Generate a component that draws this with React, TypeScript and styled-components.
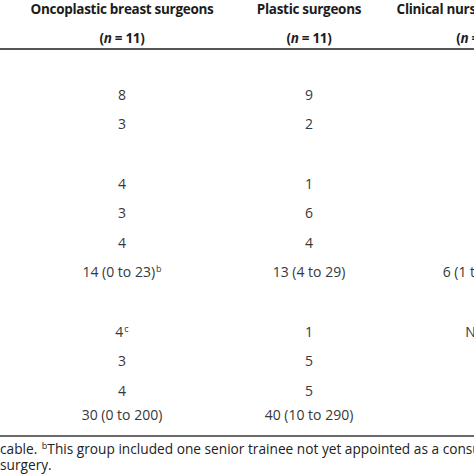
import React from "react";
import styled, { createGlobalStyle } from "styled-components";

const GlobalStyle = createGlobalStyle`
  html, body {
    margin: 0;
    padding: 0;
    background: #ffffff;
    overflow: hidden;
  }
  body {
    font-family: "Open Sans", "Liberation Sans", sans-serif;
  }
`;

const columns = "244px 130px 202px";

const Page = styled.div`
  width: 474px;
  height: 474px;
  overflow: hidden;
  background: #ffffff;
`;

const Table = styled.div`
  width: 576px;
  display: flex;
  flex-direction: column;
`;

const Head = styled.div`
  display: flex;
  flex-direction: column;
  padding-bottom: 2px;
  border-bottom: 2px solid #555555;
`;

const HeadRow = styled.div<{ $height: number; $top?: number }>`
  display: grid;
  grid-template-columns: ${columns};
  height: ${(p) => p.$height}px;
  margin-top: ${(p) => p.$top ?? 0}px;
  align-items: center;
  font-size: 13.5px;
  letter-spacing: -0.3px;
  font-weight: 700;
  color: #1c1c1c;
  white-space: nowrap;
`;

const Body = styled.div`
  display: flex;
  flex-direction: column;
  padding-bottom: 14px;
  border-bottom: 2px solid #6a6a6a;
`;

const Row = styled.div<{ $height: number }>`
  display: grid;
  grid-template-columns: ${columns};
  height: ${(p) => p.$height}px;
  align-items: center;
  font-size: 14px;
  color: #383838;
  white-space: nowrap;
`;

const Cell = styled.div`
  text-align: center;
`;

const Sup = styled.sup`
  font-size: 9px;
  line-height: 0;
  vertical-align: 5px;
  margin-left: 1px;
`;

const Italic = styled.i`
  font-style: italic;
`;

const Footnote = styled.div`
  padding-top: 4px;
  font-size: 13.7px;
  line-height: 16px;
  color: #222222;
  white-space: nowrap;
`;

type Value = { text: string; sup?: string };
type DataRow = { height: number; cells: (Value | null)[] };

const rows: DataRow[] = [
  { height: 29.6, cells: [null, null, null] },
  { height: 29.6, cells: [{ text: "8" }, { text: "9" }, null] },
  { height: 29.6, cells: [{ text: "3" }, { text: "2" }, null] },
  { height: 29.6, cells: [null, null, null] },
  { height: 29.6, cells: [{ text: "4" }, { text: "1" }, null] },
  { height: 29.6, cells: [{ text: "3" }, { text: "6" }, null] },
  { height: 29.6, cells: [{ text: "4" }, { text: "4" }, null] },
  {
    height: 29.6,
    cells: [
      { text: "14 (0 to 23)", sup: "b" },
      { text: "13 (4 to 29)" },
      { text: "6 (1 to 12)" },
    ],
  },
  { height: 29.6, cells: [null, null, null] },
  { height: 29.6, cells: [{ text: "4", sup: "c" }, { text: "1" }, { text: "NA" }] },
  { height: 29.6, cells: [{ text: "3" }, { text: "5" }, null] },
  { height: 29.6, cells: [{ text: "4" }, { text: "5" }, null] },
  { height: 16, cells: [{ text: "30 (0 to 200)" }, { text: "40 (10 to 290)" }, null] },
];

const headers = [
  "Oncoplastic breast surgeons",
  "Plastic surgeons",
  "Clinical nurse specialists",
];
const counts = ["11", "11", "6"];

const App: React.FC = () => {
  return (
    <Page>
      <GlobalStyle />
      <Table>
        <Head>
          <HeadRow $height={16}>
            {headers.map((h) => (
              <Cell key={h}>{h}</Cell>
            ))}
          </HeadRow>
          <HeadRow $height={17} $top={13}>
            {counts.map((c, i) => (
              <Cell key={i}>
                (<Italic>n</Italic> = {c})
              </Cell>
            ))}
          </HeadRow>
        </Head>

        <Body>
          {rows.map((row, i) => (
            <Row key={i} $height={row.height}>
              {row.cells.map((cell, j) => (
                <Cell key={j}>
                  {cell ? cell.text : ""}
                  {cell?.sup && <Sup>{cell.sup}</Sup>}
                </Cell>
              ))}
            </Row>
          ))}
        </Body>

        <Footnote>
          cable. <Sup>b</Sup>This group included one senior trainee not yet appointed as a
          consultant in oncoplastic
          <br />
          surgery.
        </Footnote>
      </Table>
    </Page>
  );
};

export default App;
